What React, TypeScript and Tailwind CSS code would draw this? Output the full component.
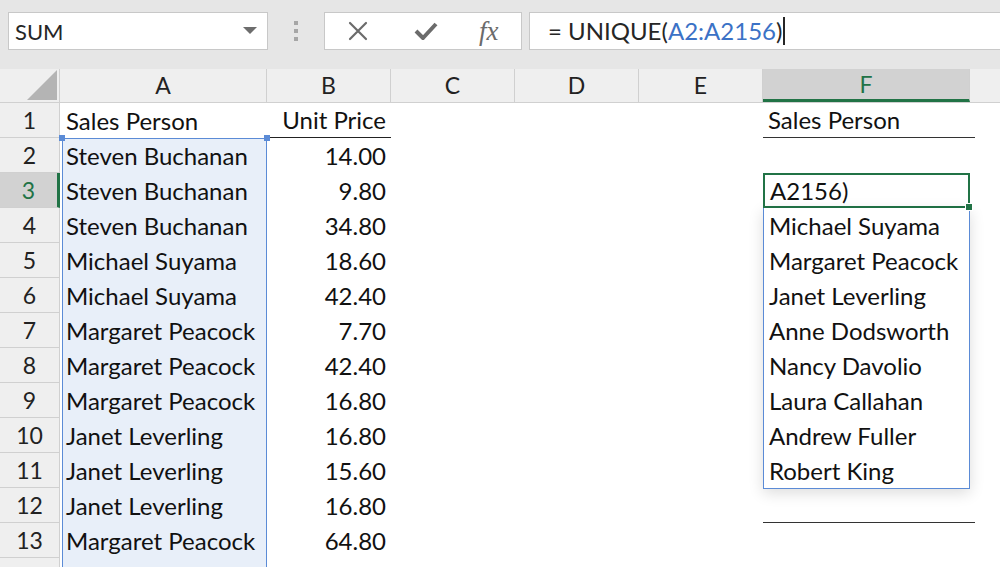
import React from "react";

const rowsA: [string, string][] = [
  ["Steven Buchanan", "14.00"],
  ["Steven Buchanan", "9.80"],
  ["Steven Buchanan", "34.80"],
  ["Michael Suyama", "18.60"],
  ["Michael Suyama", "42.40"],
  ["Margaret Peacock", "7.70"],
  ["Margaret Peacock", "42.40"],
  ["Margaret Peacock", "16.80"],
  ["Janet Leverling", "16.80"],
  ["Janet Leverling", "15.60"],
  ["Janet Leverling", "16.80"],
  ["Margaret Peacock", "64.80"],
  ["Margaret Peacock", "9.80"],
];

const spill = [
  "Michael Suyama",
  "Margaret Peacock",
  "Janet Leverling",
  "Anne Dodsworth",
  "Nancy Davolio",
  "Laura Callahan",
  "Andrew Fuller",
  "Robert King",
];

const cols = [
  { key: "A", w: "w-[207px]" },
  { key: "B", w: "w-[124px]" },
  { key: "C", w: "w-[124px]" },
  { key: "D", w: "w-[124px]" },
  { key: "E", w: "w-[124px]" },
  { key: "F", w: "w-[207px]" },
  { key: "G", w: "w-[124px]" },
];

function Toolbar() {
  return (
    <div className="h-[69px] bg-[#e6e6e6] flex items-start pt-[12px] pl-[8px]">
      {/* name box */}
      <div className="w-[260px] h-[38px] bg-white border border-[#c8c8c8] flex items-center justify-between pl-[6px] pr-[10px]">
        <span className="text-[22px] text-[#262626]">SUM</span>
        <svg width="14" height="8" viewBox="0 0 14 8">
          <path d="M0 0 L14 0 L7 7 Z" fill="#6d6d6d" />
        </svg>
      </div>
      {/* grip dots */}
      <div className="w-[56px] h-[38px] flex flex-col items-center justify-center gap-[4px]">
        <span className="w-[4px] h-[4px] bg-[#a6a6a6]" />
        <span className="w-[4px] h-[4px] bg-[#a6a6a6]" />
        <span className="w-[4px] h-[4px] bg-[#a6a6a6]" />
      </div>
      {/* buttons */}
      <div className="w-[198px] h-[38px] bg-white border border-[#c8c8c8] flex items-center pl-[22px] gap-[44px]">
        <svg width="22" height="22" viewBox="0 0 22 22">
          <path d="M3 3 L19 19 M19 3 L3 19" stroke="#6b6b6b" strokeWidth="2.2" strokeLinecap="round" />
        </svg>
        <svg width="26" height="22" viewBox="0 0 26 22">
          <path d="M3 11 L10 18 L23 4" stroke="#6b6b6b" strokeWidth="4" fill="none" strokeLinejoin="round" />
        </svg>
        <span className="text-[27px] italic text-[#6b6b6b] leading-none -ml-[4px]" style={{ fontFamily: "'Liberation Serif', serif" }}>
          fx
        </span>
      </div>
      <div className="w-[7px]" />
      {/* formula input */}
      <div className="flex-1 h-[38px] bg-white border border-[#c8c8c8] border-r-0 flex items-center pl-[18px]">
        <span className="text-[24px] text-[#262626] whitespace-pre">
          {"= UNIQUE("}
          <span className="text-[#3b72c6]">A2:A2156</span>
          {")"}
        </span>
        <span className="w-[1.5px] h-[28px] bg-[#262626] ml-[1px]" />
      </div>
    </div>
  );
}

function ColumnHeader() {
  return (
    <div className="h-[34px] flex bg-[#efefef] border-b border-[#d0d0d0]">
      <div className="w-[60px] shrink-0 border-r border-[#d0d0d0] flex items-end justify-end pr-[2px] pb-[2px]">
        <svg width="30" height="30" viewBox="0 0 30 30">
          <path d="M30 0 L30 30 L0 30 Z" fill="#b4b4b4" />
        </svg>
      </div>
      {cols.map((c) => (
        <div
          key={c.key}
          className={`${c.w} shrink-0 flex items-center justify-center text-[23px] border-r border-[#d0d0d0] ${
            c.key === "F" ? "bg-[#d2d2d2] text-[#217346] border-b-[3px] border-b-[#217346]" : "text-[#222]"
          }`}
        >
          {c.key}
        </div>
      ))}
    </div>
  );
}

function RowHead({ n, active }: { n: number; active?: boolean }) {
  return (
    <div
      className={`w-[60px] shrink-0 h-full flex items-center justify-center text-[23px] border-b border-[#d0d0d0] ${
        active ? "bg-[#d2d2d2] text-[#217346] border-r-[3px] border-r-[#217346]" : "bg-[#efefef] text-[#222] border-r border-r-[#d0d0d0]"
      }`}
    >
      {n}
    </div>
  );
}

export default function App() {
  const rows = [1, ...rowsA.map((_, i) => i + 2)];
  return (
    <div
      className="w-[1000px] h-[567px] overflow-hidden bg-white text-[#111]"
      style={{ fontFamily: "Lato, 'Noto Sans', sans-serif" }}
    >
      <Toolbar />
      <ColumnHeader />
      <div className="flex flex-col">
        {rows.map((r) => {
          const data = r >= 2 ? rowsA[r - 2] : null;
          const inA = r >= 2;
          return (
            <div key={r} className="h-[35px] flex shrink-0">
              <RowHead n={r} active={r === 3} />
              {/* A */}
              <div
                className={`relative shrink-0 flex items-center text-[24px] whitespace-nowrap ${
                  inA ? "bg-[#e8eff9] border-x border-[#5b8bd6] ml-[2px] w-[205px] pl-[3px]" : "w-[207px] pl-[6px]"
                } ${r === 2 ? "border-t border-t-[#5b8bd6]" : ""}`}
              >
                {r === 1 ? "Sales Person" : data?.[0]}
                {r === 2 && (
                  <>
                    <span className="absolute -top-[4px] -left-[4px] w-[6px] h-[6px] bg-[#5b8bd6]" />
                    <span className="absolute -top-[4px] -right-[4px] w-[6px] h-[6px] bg-[#5b8bd6]" />
                  </>
                )}
              </div>
              {/* B */}
              <div
                className={`shrink-0 flex items-center justify-end pr-[5px] text-[24px] whitespace-nowrap ${
                  r === 1 ? "border-b border-[#222] ml-[3px] w-[121px]" : "w-[124px]"
                }`}
              >
                {r === 1 ? "Unit Price" : data?.[1]}
              </div>
              <div className="w-[124px] shrink-0" />
              <div className="w-[124px] shrink-0" />
              <div className="w-[124px] shrink-0" />
              {/* F */}
              <div
                className={`relative w-[207px] shrink-0 flex items-center pl-[5px] text-[24px] whitespace-nowrap ${
                  r === 1 || r === 12 ? "border-b border-[#333] w-[212px]" : ""
                } ${r === 3 ? "border-2 border-[#217346] pl-[4px]" : ""}`}
              >
                {r === 1 ? "Sales Person" : r === 3 ? "A2156)" : ""}
                {r === 3 && (
                  <span className="absolute -bottom-[5px] -right-[5px] w-[8px] h-[8px] bg-[#217346] border border-white z-10" />
                )}
                {r === 4 && (
                  <div className="absolute top-0 left-0 w-[207px] bg-white border border-[#5b8bd6] border-t-0 shadow-[0_4px_14px_rgba(0,0,0,0.14)] flex flex-col">
                    {spill.map((s) => (
                      <div key={s} className="h-[35px] flex items-center pl-[5px] text-[24px] whitespace-nowrap">
                        {s}
                      </div>
                    ))}
                  </div>
                )}
              </div>
              <div className="w-[30px] shrink-0" />
            </div>
          );
        })}
      </div>
    </div>
  );
}
